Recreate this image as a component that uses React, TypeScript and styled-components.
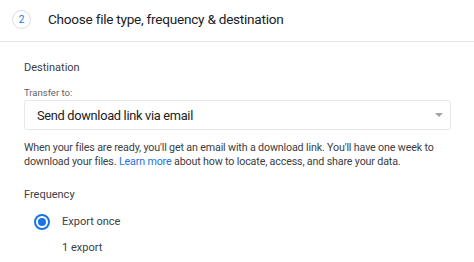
import React from 'react';
import styled, { createGlobalStyle } from 'styled-components';

const GlobalStyle = createGlobalStyle`
  body {
    margin: 0;
    background: #fff;
    font-family: Roboto, "Noto Sans", Arial, sans-serif;
    color: #3c4043;
  }
`;

const Page = styled.div`
  width: 474px;
  height: 262px;
  overflow: hidden;
`;

const StepHeader = styled.div`
  height: 41px;
  display: flex;
  align-items: center;
  padding-left: 12px;
  border-bottom: 1px solid #e3e3e3;
`;

const StepBadge = styled.div`
  width: 17px;
  height: 17px;
  border-radius: 50%;
  border: 1px solid #dadce0;
  color: #1a73e8;
  font-size: 10px;
  display: flex;
  align-items: center;
  justify-content: center;
  margin-top: -3px;
`;

const StepTitle = styled.div`
  margin-left: 17px;
  margin-top: -4px;
  font-size: 13.6px;
  letter-spacing: -0.25px;
  color: #202124;
`;

const Body = styled.div`
  padding: 18px 24px 0 24px;
`;

const SectionTitle = styled.div`
  font-size: 11px;
  color: #3c4043;
  line-height: 16px;
`;

const FieldLabel = styled.div`
  font-size: 9.5px;
  color: #5f6368;
  margin-top: 11px;
  line-height: 12px;
`;

const Select = styled.div`
  margin-top: 1px;
  width: 427px;
  height: 30px;
  box-sizing: border-box;
  border: 1px solid #e8e8e8;
  border-radius: 3px;
  display: flex;
  align-items: center;
  justify-content: space-between;
  padding: 0 7px 0 12px;
  font-size: 12.8px;
  letter-spacing: -0.3px;
  color: #202124;
`;

const Caret = styled.div`
  width: 0;
  height: 0;
  border-left: 4px solid transparent;
  border-right: 4px solid transparent;
  border-top: 4px solid #a0a4a8;
  margin-top: -1px;
`;

const Help = styled.p`
  margin: 11px 0 0 0;
  width: 422px;
  font-size: 10.7px;
  letter-spacing: -0.15px;
  line-height: 14px;
  color: #3c4043;
`;

const Link = styled.a`
  color: #1a73e8;
  text-decoration: none;
`;

const FreqTitle = styled(SectionTitle)`
  margin-top: 18px;
`;

const Option = styled.div`
  display: flex;
  align-items: center;
  margin-top: 11px;
  padding-left: 10px;
`;

const Radio = styled.div`
  width: 16px;
  height: 16px;
  box-sizing: border-box;
  border-radius: 50%;
  border: 2px solid #1a73e8;
  display: flex;
  align-items: center;
  justify-content: center;
  &::after {
    content: '';
    width: 8px;
    height: 8px;
    border-radius: 50%;
    background: #1a73e8;
  }
`;

const OptionLabel = styled.div`
  margin-left: 12px;
  font-size: 11px;
  line-height: 14px;
  color: #3c4043;
`;

const OptionSub = styled.div`
  margin: 11px 0 0 38px;
  font-size: 11px;
  line-height: 14px;
  color: #3c4043;
`;

export default function App() {
  return (
    <Page>
      <GlobalStyle />
      <StepHeader>
        <StepBadge>2</StepBadge>
        <StepTitle>Choose file type, frequency &amp; destination</StepTitle>
      </StepHeader>
      <Body>
        <SectionTitle>Destination</SectionTitle>
        <FieldLabel>Transfer to:</FieldLabel>
        <Select>
          <span>Send download link via email</span>
          <Caret />
        </Select>
        <Help>
          When your files are ready, you'll get an email with a download link. You'll have one week to
          download your files. <Link href="#">Learn more</Link> about how to locate, access, and share your data.
        </Help>
        <FreqTitle>Frequency</FreqTitle>
        <Option>
          <Radio />
          <OptionLabel>Export once</OptionLabel>
        </Option>
        <OptionSub>1 export</OptionSub>
      </Body>
    </Page>
  );
}
